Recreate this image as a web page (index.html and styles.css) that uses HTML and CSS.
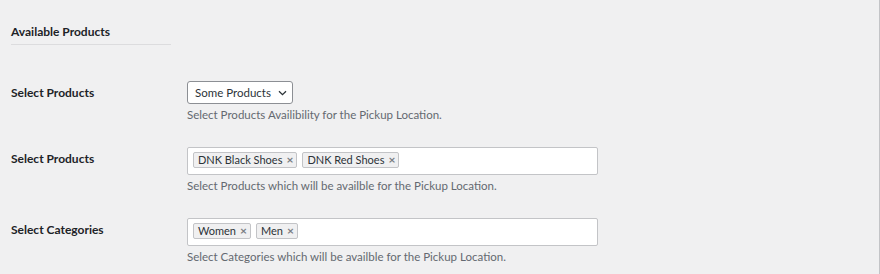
FILE: index.html
```html
<!DOCTYPE html>
<html>
<head>
<meta charset="utf-8">
<link rel="stylesheet" href="styles.css">
</head>
<body>
<div class="page">
  <h2 class="section-title">Available Products</h2>
  <div class="form">
    <div class="row">
      <div class="label">Select Products</div>
      <div class="field">
        <div class="select">
          <span>Some Products</span>
          <svg class="chev" width="9" height="6" viewBox="0 0 9 6"><path d="M1 1.2 L4.5 4.7 L8 1.2" fill="none" stroke="#2c3338" stroke-width="1.3"/></svg>
        </div>
        <p class="desc">Select Products Availibility for the Pickup Location.</p>
      </div>
    </div>
    <div class="row">
      <div class="label">Select Products</div>
      <div class="field">
        <div class="multi">
          <span class="tag">DNK Black Shoes<span class="x">×</span></span>
          <span class="tag">DNK Red Shoes<span class="x">×</span></span>
        </div>
        <p class="desc">Select Products which will be availble for the Pickup Location.</p>
      </div>
    </div>
    <div class="row">
      <div class="label">Select Categories</div>
      <div class="field">
        <div class="multi">
          <span class="tag">Women<span class="x">×</span></span>
          <span class="tag">Men<span class="x">×</span></span>
        </div>
        <p class="desc">Select Categories which will be availble for the Pickup Location.</p>
      </div>
    </div>
  </div>
</div>
</body>
</html>
```

FILE: styles.css
```css
* { box-sizing: border-box; }
html, body { margin: 0; padding: 0; height: 100%; }
body {
  background: #f0f0f1;
  font-family: Lato, "Liberation Sans", sans-serif;
  font-size: 12px;
  color: #1d2327;
}
.page {
  min-height: 100%;
  border-right: 1px solid #c3c4c7;
  padding: 24px 0 0 11px;
}
.section-title {
  margin: 0;
  width: 160px;
  font-size: 12px;
  line-height: 16px;
  font-weight: 700;
  padding-bottom: 4px;
  border-bottom: 1px solid #dcdcde;
  color: #1d2327;
}
.form {
  display: flex;
  flex-direction: column;
  gap: 24px;
  padding-top: 36px;
}
.row {
  display: grid;
  grid-template-columns: 176px 1fr;
}
.label {
  font-weight: 700;
  font-size: 12px;
  line-height: 16px;
  padding-top: 4px;
}
.field { display: flex; flex-direction: column; align-items: flex-start; }
.select {
  width: 106px;
  height: 23px;
  background: #fff;
  border: 1px solid #8c8f94;
  border-radius: 3px;
  padding: 0 5px 0 7px;
  display: flex;
  align-items: center;
  justify-content: space-between;
  color: #2c3338;
  font-size: 11.5px;
}
.chev { display: block; }
.multi {
  width: 411px;
  height: 28px;
  background: #fff;
  border: 1px solid #c3c4c7;
  border-radius: 2px;
  padding: 4px 5px;
  display: flex;
  gap: 5px;
  align-items: flex-start;
}
.tag {
  height: 16px;
  line-height: 14px;
  background: #f0f0f1;
  border: 1px solid #c3c4c7;
  border-radius: 2px;
  padding: 0 3px 0 4px;
  font-size: 11px;
  color: #2c3338;
  white-space: nowrap;
}
.x { color: #787c82; font-size: 12px; font-weight: 700; margin-left: 4px; }
.desc {
  margin: 3px 0 0;
  font-size: 11.5px;
  line-height: 16px;
  color: #646970;
}
```
